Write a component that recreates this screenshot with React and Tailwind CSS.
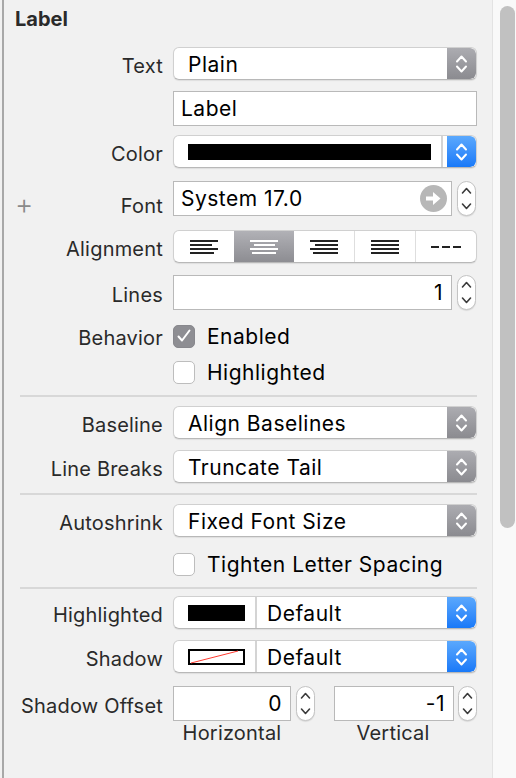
import React from 'react';

const font = { fontFamily: 'Inter, "Noto Sans", sans-serif' };
const ctl = 'text-[21px] tracking-[0.5px] text-black leading-none';
const lbl = 'text-[20px] tracking-[0.2px] text-[#2a2a2a] leading-none';

function Chevrons({ color = 'white', w = 13, stroke = 2 }) {
    return (
        <svg width={w} height="20" viewBox="0 0 13 20" fill="none" stroke={color} strokeWidth={stroke} strokeLinecap="round" strokeLinejoin="round">
            <path d="M2 7.5 L6.5 2.5 L11 7.5" />
            <path d="M2 12.5 L6.5 17.5 L11 12.5" />
        </svg>
    );
}

function PopupButton({ blue }) {
    return (
        <div className={`w-[29px] self-stretch flex items-center justify-center rounded-r-[6px] ${blue ? 'bg-gradient-to-b from-[#5aa8fd] to-[#1879f8]' : 'bg-gradient-to-b from-[#acacb1] to-[#8b8b90]'}`}>
            <Chevrons />
        </div>
    );
}

function Popup({ children, blue, className = '' }) {
    return (
        <div className={`flex h-[33px] w-[304px] rounded-[6px] bg-white border border-[#d0d0d0] border-b-[#b8b8b8] shadow-[0_1px_1px_rgba(0,0,0,0.08)] overflow-hidden ${className}`}>
            <div className="flex-1 flex items-center min-w-0">{children}</div>
            <PopupButton blue={blue} />
        </div>
    );
}

function Stepper() {
    return (
        <div className="w-[19px] h-[35px] rounded-full bg-white border border-[#c4c4c4] shadow-[0_1px_1px_rgba(0,0,0,0.1)] flex items-center justify-center">
            <svg width="11" height="23" viewBox="0 0 11 23" fill="none" stroke="#3a3a3a" strokeWidth="1.6" strokeLinecap="round" strokeLinejoin="round">
                <path d="M1.5 6 L5.5 1.5 L9.5 6" />
                <path d="M1.5 17 L5.5 21.5 L9.5 17" />
            </svg>
        </div>
    );
}

function Field({ children, className = '', right }) {
    return (
        <div className={`h-[35px] bg-white border border-[#b9b9b9] flex items-center ${ctl} ${right ? 'justify-end pr-[8px]' : 'pl-[7px]'} ${className}`}>
            {children}
        </div>
    );
}

function Check({ checked }) {
    return (
        <div className={`w-[22px] h-[23px] rounded-[5px] flex items-center justify-center ${checked ? 'bg-[#8e8e93] border border-[#88888d]' : 'bg-white border border-[#bdbdbd]'}`}>
            {checked && (
                <svg width="16" height="16" viewBox="0 0 16 16" fill="none" stroke="white" strokeWidth="2" strokeLinecap="round" strokeLinejoin="round">
                    <path d="M2.5 8.5 L6 12.5 L13.5 2.5" />
                </svg>
            )}
        </div>
    );
}

function Row({ label, children, className = '' }) {
    return (
        <div className={`flex items-center ${className}`}>
            <div className={`w-[159px] text-right whitespace-nowrap pt-[4px] ${lbl}`}>{label}</div>
            <div className="ml-[10px] flex items-center">{children}</div>
        </div>
    );
}

function Sep({ className = '' }) {
    return <div className={`ml-[16px] w-[457px] h-[2px] bg-[#d8d8d8] ${className}`} />;
}

function AlignIcon({ widths, align }) {
    return (
        <div className="flex flex-col gap-[2px] w-[28px]" style={{ alignItems: align }}>
            {widths.map((w, i) => (
                <div key={i} className="h-[2px] bg-current" style={{ width: w }} />
            ))}
        </div>
    );
}

function Segmented() {
    const seg = 'flex-1 flex items-center justify-center text-[#222]';
    return (
        <div className="flex h-[33px] w-[304px] rounded-[6px] bg-white border border-[#d0d0d0] border-b-[#b8b8b8] shadow-[0_1px_1px_rgba(0,0,0,0.08)] overflow-hidden">
            <div className={seg}><AlignIcon widths={[28, 22, 28, 24]} align="flex-start" /></div>
            <div className="flex-1 flex items-center justify-center text-white bg-gradient-to-b from-[#b1b1b6] to-[#8d8d92]"><AlignIcon widths={[28, 21, 28, 24]} align="center" /></div>
            <div className={`${seg} border-r-[1.5px] border-[#dedede]`}><AlignIcon widths={[28, 23, 28, 25]} align="flex-end" /></div>
            <div className={`${seg} border-r-[1.5px] border-[#dedede]`}><AlignIcon widths={[28, 28, 28, 28]} align="center" /></div>
            <div className={seg}>
                <div className="flex gap-[3px]">
                    <div className="w-[8px] h-[2px] bg-[#222]" />
                    <div className="w-[8px] h-[2px] bg-[#222]" />
                    <div className="w-[8px] h-[2px] bg-[#222]" />
                </div>
            </div>
        </div>
    );
}

export default function App() {
    return (
        <div className="flex h-[778px] w-[516px] bg-[#f1f1f1] overflow-hidden" style={font}>
            <div className="w-[2px]" />
            <div className="w-[2px] bg-[#a8a8a8]" />
            <div className="w-[488px] flex flex-col">
                <div className="mt-[8px] ml-[11px] h-[22px] flex items-center text-[20px] font-bold text-[#2a2a2a]">Label</div>

                <Row label="Text" className="mt-[17px]">
                    <Popup><span className={`pl-[14px] pt-[2px] ${ctl}`}>Plain</span></Popup>
                </Row>

                <Row label="" className="mt-[11px]">
                    <Field className="w-[304px]">Label</Field>
                </Row>

                <Row label="Color" className="mt-[9px]">
                    <Popup blue>
                        <div className="flex-1 pl-[14px] pr-[10px]"><div className="h-[16px] bg-black" /></div>
                        <div className="w-[2px] self-stretch bg-[#d4d4d4]" />
                        <div className="w-[4px]" />
                    </Popup>
                </Row>

                <div className="mt-[13px] flex items-start h-[35px] relative">
                    <span className="absolute left-[11px] top-[9px] text-[28px] font-light text-[#8a8a8a] leading-none">+</span>
                    <div className={`w-[159px] text-right pt-[15px] ${lbl}`}>Font</div>
                    <div className="ml-[10px] flex items-center gap-[5px]">
                        <Field className="w-[279px] pr-[4px] justify-between">
                            <span>System 17.0</span>
                            <svg width="27" height="27" viewBox="0 0 27 27">
                                <circle cx="13.5" cy="13.5" r="13.5" fill="#b7b7b7" />
                                <path d="M6 11.5 H13 V7 L20.5 13.5 L13 20 V15.5 H6 Z" fill="white" />
                            </svg>
                        </Field>
                        <Stepper />
                    </div>
                </div>

                <Row label="Alignment" className="mt-[14px]">
                    <Segmented />
                </Row>

                <Row label="Lines" className="mt-[12px]">
                    <div className="flex items-center gap-[5px]">
                        <Field right className="w-[279px]">1</Field>
                        <Stepper />
                    </div>
                </Row>

                <Row label="Behavior" className="mt-[14px]">
                    <Check checked />
                    <span className={`ml-[12px] ${ctl} text-[#1a1a1a]`}>Enabled</span>
                </Row>

                <Row label="" className="mt-[13px]">
                    <Check />
                    <span className={`ml-[12px] ${ctl} text-[#1a1a1a]`}>Highlighted</span>
                </Row>

                <Sep className="mt-[11px]" />

                <Row label="Baseline" className="mt-[9px]">
                    <Popup><span className={`pl-[14px] pt-[2px] ${ctl}`}>Align Baselines</span></Popup>
                </Row>

                <Row label="Line Breaks" className="mt-[11px]">
                    <Popup><span className={`pl-[14px] pt-[2px] ${ctl}`}>Truncate Tail</span></Popup>
                </Row>

                <Sep className="mt-[10px]" />

                <Row label="Autoshrink" className="mt-[9px]">
                    <Popup><span className={`pl-[14px] pt-[2px] ${ctl}`}>Fixed Font Size</span></Popup>
                </Row>

                <Row label="" className="mt-[16px]">
                    <Check />
                    <span className={`ml-[12px] ${ctl} text-[#1a1a1a]`}>Tighten Letter Spacing</span>
                </Row>

                <Sep className="mt-[11px]" />

                <Row label="Highlighted" className="mt-[7px]">
                    <Popup blue>
                        <div className="w-[81px] pl-[14px] pr-[10px]"><div className="h-[16px] bg-black" /></div>
                        <div className="w-[2px] self-stretch bg-[#d4d4d4]" />
                        <span className={`pl-[10px] pt-[2px] ${ctl}`}>Default</span>
                    </Popup>
                </Row>

                <Row label="Shadow" className="mt-[11px]">
                    <Popup blue>
                        <div className="w-[81px] pl-[14px] pr-[10px]">
                            <svg width="57" height="16" viewBox="0 0 57 16" className="block">
                                <rect x="1" y="1" width="55" height="14" fill="white" stroke="black" strokeWidth="2" />
                                <line x1="3" y1="14" x2="50" y2="2" stroke="#ff3b30" strokeWidth="1" />
                            </svg>
                        </div>
                        <div className="w-[2px] self-stretch bg-[#d4d4d4]" />
                        <span className={`pl-[10px] pt-[2px] ${ctl}`}>Default</span>
                    </Popup>
                </Row>

                <Row label="Shadow Offset" className="mt-[13px]">
                    <div className="flex items-center">
                        <Field right className="w-[118px]">0</Field>
                        <div className="ml-[5px]"><Stepper /></div>
                        <Field right className="ml-[19px] w-[120px]">-1</Field>
                        <div className="ml-[4px]"><Stepper /></div>
                    </div>
                </Row>
                <div className={`mt-[2px] flex ${lbl}`}>
                    <div className="ml-[169px] w-[118px] text-center">Horizontal</div>
                    <div className="ml-[42px] w-[120px] text-center">Vertical</div>
                </div>
            </div>
            <div className="w-[1px] bg-[#e3e3e3]" />
            <div className="flex-1 bg-[#f9f9f9] pt-[6px] pl-[7px]">
                <div className="w-[15px] h-[522px] rounded-full bg-[#c1c1c1]" />
            </div>
        </div>
    );
}
